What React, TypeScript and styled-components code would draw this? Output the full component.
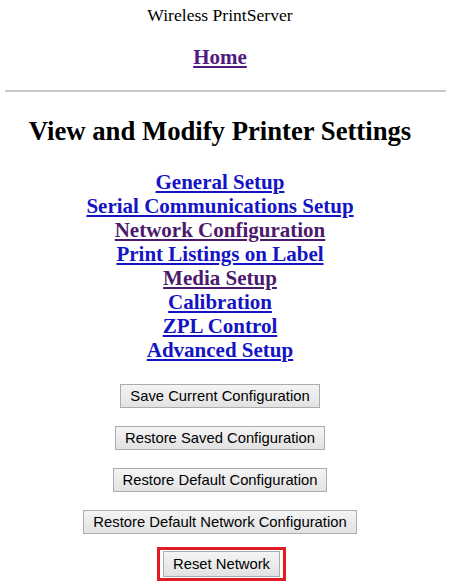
import styled, { createGlobalStyle } from "styled-components";

const GlobalStyle = createGlobalStyle`
  html, body {
    margin: 0;
    padding: 0;
    background: #ffffff;
  }
  body {
    font-family: "Liberation Serif", "Times New Roman", serif;
    color: #000000;
  }
`;

const navItems = [
  { label: "General Setup", visited: false },
  { label: "Serial Communications Setup", visited: false },
  { label: "Network Configuration", visited: true },
  { label: "Print Listings on Label", visited: false },
  { label: "Media Setup", visited: true },
  { label: "Calibration", visited: false },
  { label: "ZPL Control", visited: false },
  { label: "Advanced Setup", visited: false },
];

const actions = [
  "Save Current Configuration",
  "Restore Saved Configuration",
  "Restore Default Configuration",
  "Restore Default Network Configuration",
];

const App = (): JSX.Element => {
  return (
    <>
      <GlobalStyle />
      <Page>
        <Header>
          <ServerName>Wireless PrintServer</ServerName>
          <HomeLink href="#" $visited>
            Home
          </HomeLink>
        </Header>
        <Rule />
        <Content>
          <Heading>View and Modify Printer Settings</Heading>
          <NavList>
            {navItems.map((item) => (
              <NavLink key={item.label} href="#" $visited={item.visited}>
                {item.label}
              </NavLink>
            ))}
          </NavList>
          <ActionForm onSubmit={(event) => event.preventDefault()}>
            {actions.map((label) => (
              <ActionRow key={label}>
                <ActionButton type="button">{label}</ActionButton>
              </ActionRow>
            ))}
            <ActionRow>
              <Highlight>
                <ActionButton type="button" $tall>
                  Reset Network
                </ActionButton>
              </Highlight>
            </ActionRow>
          </ActionForm>
        </Content>
      </Page>
    </>
  );
};

const Page = styled.div`
  padding-top: 5px;
`;

const Header = styled.div`
  display: flex;
  flex-direction: column;
  align-items: center;
  padding-right: 10px;
`;

const ServerName = styled.div`
  font-size: 17.6px;
  line-height: 20px;
`;

const HomeLink = styled.a<{ $visited?: boolean }>`
  margin-top: 20px;
  font-size: 21px;
  line-height: 24px;
  font-weight: bold;
  color: ${(p) => (p.$visited ? "#521a80" : "#1414c4")};
  text-decoration: underline;
`;

const Rule = styled.hr`
  margin: 21px 4px 0 5px;
  height: 0;
  border: none;
  border-top: 2px solid #c8c8c8;
`;

const Content = styled.div`
  display: flex;
  flex-direction: column;
  align-items: center;
  padding-right: 10px;
`;

const Heading = styled.h1`
  margin: 23.5px 0 23.5px;
  font-size: 26.7px;
  line-height: 31px;
  font-weight: bold;
`;

const NavList = styled.nav`
  display: flex;
  flex-direction: column;
  align-items: center;
`;

const NavLink = styled.a<{ $visited?: boolean }>`
  font-size: 21px;
  line-height: 24px;
  font-weight: bold;
  color: ${(p) => (p.$visited ? "#4c1a6c" : "#1414c4")};
  text-decoration: underline;
`;

const ActionForm = styled.form`
  margin-top: 13px;
  display: flex;
  flex-direction: column;
  align-items: center;
`;

const ActionRow = styled.div`
  height: 42px;
  display: flex;
  align-items: center;
  justify-content: center;
`;

const ActionButton = styled.button<{ $tall?: boolean }>`
  height: ${(p) => (p.$tall ? "26px" : "24px")};
  padding: 0 9px;
  font-family: "Liberation Sans", Arial, sans-serif;
  font-size: 14.8px;
  color: #000000;
  background: linear-gradient(#f4f4f4, #e2e2e2);
  border: 1px solid #acacac;
  border-radius: 0;
  cursor: pointer;
`;

const Highlight = styled.div`
  display: inline-flex;
  padding: 1px 3px;
  border: 3px solid #e31b23;
  margin-left: 3px;
`;

export default App;
